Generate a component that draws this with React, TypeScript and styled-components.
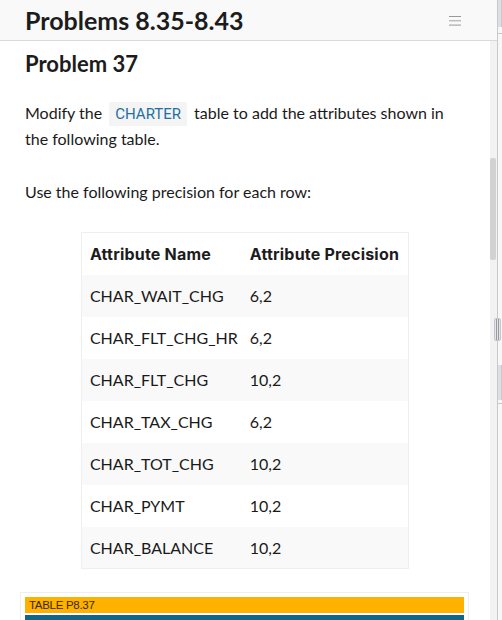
import React from "react";
import styled, { createGlobalStyle } from "styled-components";

interface AttrRow {
  name: string;
  precision: string;
}

const rows: AttrRow[] = [
  { name: "CHAR_WAIT_CHG", precision: "6,2" },
  { name: "CHAR_FLT_CHG_HR", precision: "6,2" },
  { name: "CHAR_FLT_CHG", precision: "10,2" },
  { name: "CHAR_TAX_CHG", precision: "6,2" },
  { name: "CHAR_TOT_CHG", precision: "10,2" },
  { name: "CHAR_PYMT", precision: "10,2" },
  { name: "CHAR_BALANCE", precision: "10,2" },
];

const GlobalStyle = createGlobalStyle`
  html, body {
    margin: 0;
    padding: 0;
    overflow: hidden;
    background: #fff;
  }
  * {
    box-sizing: border-box;
  }
`;

function App() {
  return (
    <>
      <GlobalStyle />
      <Page>
        <MainColumn>
          <Header>
            <Title>Problems 8.35-8.43</Title>
            <MenuButton aria-label="menu">
              <svg width="12" height="10" viewBox="0 0 12 10">
                <rect x="0" y="0" width="12" height="1" fill="#999" />
                <rect x="0" y="4" width="12" height="1.4" fill="#bbb" />
                <rect x="0" y="8.6" width="12" height="1" fill="#999" />
              </svg>
            </MenuButton>
          </Header>
          <Body>
            <Content>
              <Heading>Problem 37</Heading>
              <Para>
                Modify the <Code>CHARTER</Code> table to add the attributes
                shown in the following table.
              </Para>
              <Para>Use the following precision for each row:</Para>
              <TableWrap>
                <Table>
                  <thead>
                    <tr>
                      <Th>Attribute Name</Th>
                      <Th>Attribute Precision</Th>
                    </tr>
                  </thead>
                  <tbody>
                    {rows.map((row, index) => (
                      <Tr key={index} $striped={index % 2 === 0}>
                        <Td>{row.name}</Td>
                        <Td>{row.precision}</Td>
                      </Tr>
                    ))}
                  </tbody>
                </Table>
              </TableWrap>
              <Figure>
                <FigureLabel>TABLE P8.37</FigureLabel>
                <FigureCaption>ATTRIBUTES AND VALUES FOR PROBLEM 37</FigureCaption>
              </Figure>
            </Content>
            <ScrollTrack>
              <ScrollThumb />
            </ScrollTrack>
          </Body>
        </MainColumn>
        <Divider>
          <SplitHandle />
        </Divider>
        <SideStrip>
          <SideTab $height={27} />
          <SideLine $top={6} />
          <SideTab $height={35} $top={331} />
          <SideLine $top={3} />
        </SideStrip>
      </Page>
    </>
  );
}

const Page = styled.div`
  display: flex;
  width: 502px;
  height: 620px;
  overflow: hidden;
  font-family: Lato, "Noto Sans", sans-serif;
  color: #1a1a1a;
`;

const MainColumn = styled.div`
  display: flex;
  flex-direction: column;
  width: 497px;
  flex-shrink: 0;
`;

const Header = styled.header`
  height: 41px;
  flex-shrink: 0;
  display: flex;
  align-items: center;
  justify-content: space-between;
  padding: 0 36px 0 25px;
  background: #f9f9f9;
  border-bottom: 1px solid #d9d9d9;
`;

const Title = styled.h1`
  margin: 0;
  font-size: 25px;
  font-weight: 700;
  color: #1c1c1c;
  line-height: 1;
`;

const MenuButton = styled.div`
  display: flex;
  align-items: center;
  margin-top: 2px;
`;

const Body = styled.div`
  flex: 1;
  display: flex;
  min-height: 0;
`;

const Content = styled.main`
  flex: 1;
  overflow: hidden;
  padding: 8px 25px 0 25px;
`;

const Heading = styled.h2`
  margin: 0 0 21px;
  font-size: 22px;
  font-weight: 700;
  color: #1c1c1c;
  line-height: 30px;
`;

const Para = styled.p`
  margin: 0 0 27px;
  font-size: 16px;
  line-height: 25.6px;
  color: #1a1a1a;
`;

const Code = styled.code`
  display: inline-block;
  background: #f4f4f4;
  color: #1f6fa3;
  font-family: Roboto, "Liberation Sans", sans-serif;
  font-size: 15px;
  line-height: 24px;
  padding: 0 6px;
  margin: 0 3px;
  border-radius: 2px;
`;

const TableWrap = styled.div`
  display: flex;
  justify-content: center;
  margin-top: 28px;
`;

const Table = styled.table`
  border-collapse: collapse;
  border: 1px solid #efefef;
  font-size: 16px;
`;

const Th = styled.th`
  height: 42px;
  padding: 0 9px 0 8px;
  text-align: left;
  font-family: Inter, "Noto Sans", sans-serif;
  font-weight: 700;
  font-size: 16px;
  letter-spacing: 0.2px;
  color: #1c1c1c;
  &:first-child {
    padding-right: 4px;
  }
`;

const Tr = styled.tr<{ $striped: boolean }>`
  background: ${(props) => (props.$striped ? "#f9f9f9" : "#fff")};
`;

const Td = styled.td`
  height: 42px;
  padding: 0 9px 0 8px;
  color: #1a1a1a;
  &:first-child {
    padding-right: 4px;
  }
`;

const Figure = styled.figure`
  margin: 23px -4px 0 -5px;
  padding: 4px;
  border: 1px solid #efefef;
`;

const FigureLabel = styled.div`
  height: 16px;
  background: #ffb100;
  color: #3a2a00;
  font-family: "Liberation Sans", sans-serif;
  font-size: 11.5px;
  line-height: 16px;
  padding-left: 4px;
  letter-spacing: -0.3px;
`;

const FigureCaption = styled.div`
  margin-top: 2px;
  height: 18px;
  background: #0f6689;
  color: #fff;
  font-family: "Liberation Sans", sans-serif;
  font-weight: 700;
  font-size: 11.5px;
  line-height: 18px;
  padding-left: 4px;
`;

const ScrollTrack = styled.div`
  width: 7px;
  flex-shrink: 0;
  background: #f2f2f2;
  padding-top: 117px;
`;

const ScrollThumb = styled.div`
  width: 6px;
  height: 102px;
  background: #d2d2d2;
  border-radius: 2px;
`;

const Divider = styled.div`
  position: relative;
  width: 1px;
  flex-shrink: 0;
  background: #c9c9c9;
`;

const SplitHandle = styled.div`
  position: absolute;
  top: 318px;
  left: -3px;
  width: 7px;
  height: 23px;
  border: 1px solid #c4c4cc;
  border-radius: 2px;
  background: linear-gradient(
    to right,
    #e4e4ea 0 1px,
    #999 1px 2px,
    #e4e4ea 2px 3px,
    #999 3px 4px,
    #e4e4ea 4px
  );
`;

const SideStrip = styled.div`
  flex: 1;
  display: flex;
  flex-direction: column;
  background: #f7f7f7;
`;

const SideTab = styled.div<{ $height: number; $top?: number }>`
  height: ${(props) => props.$height}px;
  margin-top: ${(props) => props.$top || 0}px;
  background: #dedee6;
  border-right: 1px solid #c9c9d0;
`;

const SideLine = styled.div<{ $top: number }>`
  height: 1px;
  margin-top: ${(props) => props.$top}px;
  background: #c9c9c9;
`;

export default App;
